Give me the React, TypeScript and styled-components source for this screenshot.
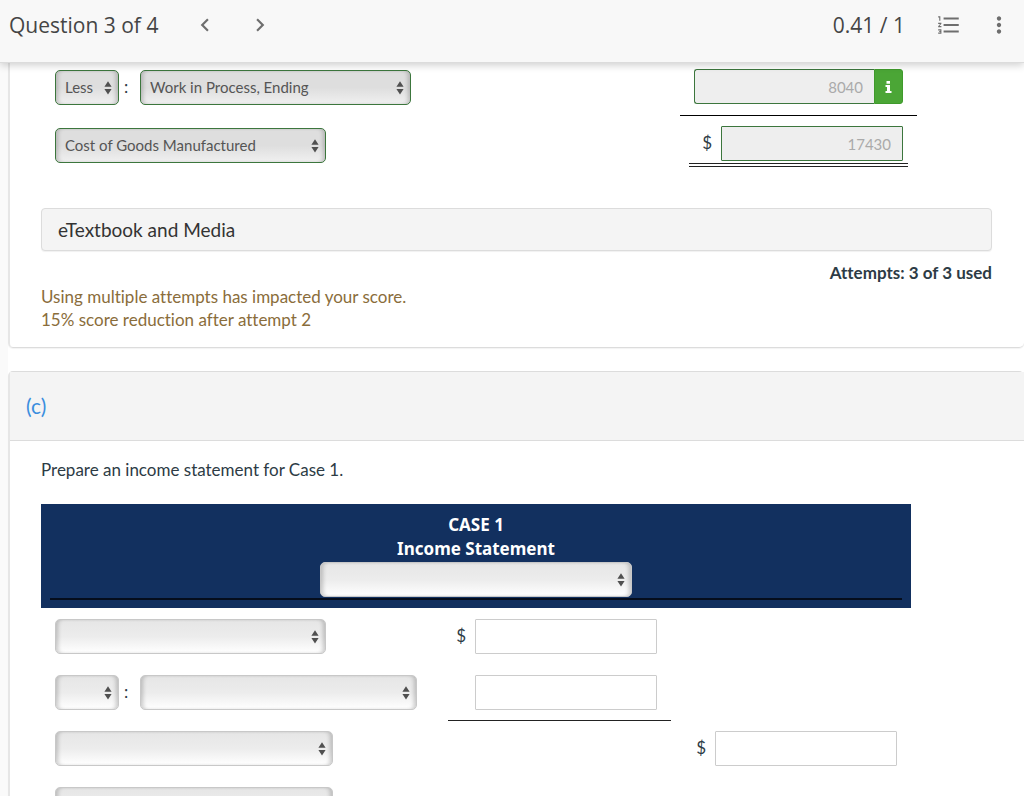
import React from "react";
import styled, { createGlobalStyle } from "styled-components";
import {
  MdChevronLeft,
  MdChevronRight,
  MdFormatListNumbered,
  MdMoreVert,
} from "react-icons/md";

const GlobalStyle = createGlobalStyle`
  *, *::before, *::after { box-sizing: border-box; }
  body {
    margin: 0;
    background: #fff;
    color: #2d3b45;
    font: 17px/24px Lato, sans-serif;
    font-variant-ligatures: none;
  }
  button, input, select { font-family: inherit; font-variant-ligatures: none; margin: 0; }
`;

const Shell = styled.div`
  display: flex;
  flex-direction: column;
  height: 100vh;
`;

const TopBar = styled.header`
  position: relative;
  z-index: 1;
  flex: none;
  display: flex;
  align-items: center;
  justify-content: space-between;
  height: 63px;
  padding: 0 12px 12px 9px;
  background: #f8f8f8;
  border-bottom: 1px solid #dcdcdc;
  box-shadow: 0 2px 8px rgba(0, 0, 0, 0.2);
  color: #454545;
  font: 21px/28px "Open Sans", sans-serif;
`;

const BarGroup = styled.div<{ $gap: number }>`
  display: flex;
  align-items: center;
  gap: ${(p) => p.$gap}px;
`;

const Title = styled.h1`
  margin: 0 5px 0 0;
  font: inherit;
`;

const Score = styled.span`
  margin-right: 7px;
`;

const IconButton = styled.button`
  display: flex;
  padding: 0;
  border: 0;
  background: none;
  color: #6e6e6e;
  font-size: 26px;
`;

const Scroller = styled.main`
  flex: 1;
  min-height: 0;
  overflow-y: auto;
  scrollbar-width: none;
  padding-left: 8px;
  background: linear-gradient(to right, #fafafa 8px, #fff 8px);
`;

const Panel = styled.section<{ $continued?: boolean }>`
  border: 1px solid #dcdcdc;
  border-left: 2px solid #e6e6e6;
  border-right: 0;
  border-top-width: ${(p) => (p.$continued ? 0 : 1)}px;
  border-radius: ${(p) => (p.$continued ? "0 0 5px 5px" : "5px 5px 0 0")};
  box-shadow: 0 1px 1px rgba(0, 0, 0, 0.05);
  margin-bottom: 23px;
`;

const PanelHeader = styled.h2`
  display: flex;
  align-items: center;
  height: 69px;
  margin: 0;
  padding: 0 16px;
  background: #f4f4f4;
  border-bottom: 1px solid #dcdcdc;
  color: #3b8ede;
  font-size: 21px;
  font-weight: 400;
`;

const PanelBody = styled.div`
  padding: 0 32px 16px 31px;
`;

const Sheet = styled.table<{ $width: number }>`
  width: 100%;
  max-width: ${(p) => p.$width}px;
  table-layout: fixed;
  border-collapse: collapse;
`;

const Col = styled.col<{ $width: number }>`
  width: ${(p) => p.$width}px;
`;

const Cell = styled.td`
  padding: 0;
  vertical-align: bottom;
`;

const Line = styled.div<{ $top?: number; $bottom?: number }>`
  display: flex;
  align-items: center;
  padding: ${(p) => p.$top ?? 11}px 14px ${(p) => p.$bottom ?? 10}px;
`;

const Amount = styled(Line)<{ $rule?: boolean }>`
  width: 223px;
  justify-content: flex-end;
  box-shadow: ${(p) => (p.$rule ? "0 1px 0 #222" : "none")};
`;

const WideAmount = styled(Line)`
  border-bottom: 1px solid #000;
`;

const TotalAmount = styled(Line)`
  justify-content: flex-end;
  margin: 0 9px 41px;
  padding: 10px 5px 2px;
  border-bottom: 4px double #222;
`;

const Currency = styled.span`
  margin-right: 9px;
  padding-bottom: 2px;
`;

const Colon = styled.span`
  width: 21px;
  padding: 0 0 2px 5px;
`;

const SelectBox = styled.span<{ $width: number }>`
  position: relative;
  display: inline-flex;
  width: ${(p) => p.$width}px;
  color: #555;
`;

const SelectField = styled.select<{ $graded?: boolean }>`
  appearance: none;
  width: 100%;
  height: 35px;
  padding: 0 20px 2px 9px;
  border: 1px solid ${(p) => (p.$graded ? "#3c763d" : "#c8c8c8")};
  border-radius: 5px;
  background: ${(p) =>
    p.$graded
      ? "linear-gradient(#dedede 50%, #f0f0f0)"
      : "linear-gradient(#e6e6e6, #ececec 50%, #fff)"};
  box-shadow: inset 4px 0 4px -2px rgba(0, 0, 0, 0.2),
    inset -4px 0 4px -2px rgba(0, 0, 0, 0.2);
  color: #555;
  font-size: 15px;
  opacity: 1;
`;

const Arrows = styled.svg`
  position: absolute;
  top: 11px;
  right: 7px;
  pointer-events: none;
`;

const NumberField = styled.input<{ $graded?: boolean; $joined?: boolean }>`
  width: ${(p) => (p.$joined ? 180 : 182)}px;
  height: 35px;
  padding: 0 11px;
  border: 1px solid ${(p) => (p.$graded ? "#3c763d" : "#ccc")};
  border-right-width: ${(p) => (p.$joined ? 0 : 1)}px;
  border-radius: ${(p) => (p.$joined ? "3px 0 0 3px" : "1px")};
  background: ${(p) => (p.$graded ? "#eee" : "#fff")};
  color: #aaa;
  font-size: 15px;
  text-align: right;
`;

const InfoButton = styled.button`
  display: flex;
  align-items: center;
  justify-content: center;
  width: 29px;
  height: 35px;
  padding: 0;
  border: 1px solid #3f9a2c;
  border-radius: 0 3px 3px 0;
  background: #4ba636;
`;

const MediaButton = styled.button`
  display: block;
  width: 100%;
  height: 43px;
  padding: 0 16px 1px;
  border: 1px solid #dcdcdc;
  border-radius: 4px;
  background: #f4f4f4;
  box-shadow: 0 1px 1px rgba(0, 0, 0, 0.06);
  color: #333;
  font-size: 19px;
  text-align: left;
`;

const Attempts = styled.p`
  margin: 10px 0 0;
  font-weight: 700;
  text-align: right;
`;

const Warning = styled.p`
  margin: 0;
  color: #8a6d3b;
  line-height: 23px;
`;

const Prompt = styled.p`
  margin: 0;
  padding: 17px 0 22px;
`;

const Heading = styled.th`
  padding: 9px 9px 8px;
  background: #12305f;
  color: #fff;
  font: 700 17px/24px "Noto Sans", sans-serif;
`;

const HeadingInner = styled.div`
  display: flex;
  flex-direction: column;
  align-items: center;
  border-bottom: 2px solid #050d1c;
`;

const HeadingSelect = styled.div`
  display: flex;
  padding: 1px 0;
`;

function Dropdown({
  label,
  width,
  value = "",
  graded,
}: {
  label: string;
  width: number;
  value?: string;
  graded?: boolean;
}) {
  return (
    <SelectBox $width={width}>
      <SelectField
        aria-label={label}
        $graded={graded}
        disabled={graded}
        defaultValue={value}
      >
        <option value={value}>{value}</option>
      </SelectField>
      <Arrows width="8" height="14" viewBox="0 0 8 14" aria-hidden="true">
        <path d="M4 0.2 7.6 5.8H0.4ZM0.4 8H7.6L4 13.6Z" fill="#505050" />
      </Arrows>
    </SelectBox>
  );
}

export default function App() {
  return (
    <>
      <GlobalStyle />
      <Shell>
        <TopBar>
          <BarGroup $gap={29}>
            <Title>Question 3 of 4</Title>
            <IconButton aria-label="Previous question">
              <MdChevronLeft />
            </IconButton>
            <IconButton aria-label="Next question">
              <MdChevronRight />
            </IconButton>
          </BarGroup>
          <BarGroup $gap={24}>
            <Score>0.41 / 1</Score>
            <IconButton aria-label="Question list">
              <MdFormatListNumbered />
            </IconButton>
            <IconButton aria-label="More options">
              <MdMoreVert />
            </IconButton>
          </BarGroup>
        </TopBar>

        <Scroller>
          <Panel $continued>
            <PanelBody>
              <Sheet $width={876}>
                <colgroup>
                  <Col $width={639} />
                  <Col $width={237} />
                </colgroup>
                <tbody>
                  <tr>
                    <Cell>
                      <Line $top={7} $bottom={11}>
                        <Dropdown label="Add or less" width={64} value="Less" graded />
                        <Colon>:</Colon>
                        <Dropdown
                          label="Line item"
                          width={271}
                          value="Work in Process, Ending"
                          graded
                        />
                      </Line>
                    </Cell>
                    <Cell>
                      <WideAmount $top={6} $bottom={11}>
                        <NumberField
                          aria-label="Work in process amount"
                          defaultValue="8040"
                          disabled
                          $graded
                          $joined
                        />
                        <InfoButton aria-label="Answer information">
                          <svg width="7" height="12" viewBox="0 0 7 12" aria-hidden="true">
                            <path
                              d="M1.5 0H5V2.8H1.5ZM0.5 4H5V10H6.5V12H0.5V10H2V6H0.5Z"
                              fill="#fff"
                            />
                          </svg>
                        </InfoButton>
                      </WideAmount>
                    </Cell>
                  </tr>
                  <tr>
                    <Cell>
                      <Line $top={12} $bottom={45}>
                        <Dropdown
                          label="Total line"
                          width={271}
                          value="Cost of Goods Manufactured"
                          graded
                        />
                      </Line>
                    </Cell>
                    <Cell>
                      <TotalAmount>
                        <Currency>$</Currency>
                        <NumberField
                          aria-label="Cost of goods manufactured amount"
                          defaultValue="17430"
                          disabled
                          $graded
                        />
                      </TotalAmount>
                    </Cell>
                  </tr>
                </tbody>
              </Sheet>
              <MediaButton>eTextbook and Media</MediaButton>
              <Attempts>Attempts: 3 of 3 used</Attempts>
              <Warning>
                Using multiple attempts has impacted your score.
                <br />
                15% score reduction after attempt 2
              </Warning>
            </PanelBody>
          </Panel>

          <Panel>
            <PanelHeader>(c)</PanelHeader>
            <PanelBody>
              <Prompt>Prepare an income statement for Case 1.</Prompt>
              <Sheet $width={870}>
                <colgroup>
                  <Col $width={407} />
                  <Col $width={240} />
                  <Col $width={223} />
                </colgroup>
                <thead>
                  <tr>
                    <Heading colSpan={3}>
                      <HeadingInner>
                        <span>CASE 1</span>
                        <span>Income Statement</span>
                        <HeadingSelect>
                          <Dropdown label="Statement period" width={312} />
                        </HeadingSelect>
                      </HeadingInner>
                    </Heading>
                  </tr>
                </thead>
                <tbody>
                  <tr>
                    <Cell>
                      <Line>
                        <Dropdown label="First line item" width={271} />
                      </Line>
                    </Cell>
                    <Cell>
                      <Amount>
                        <Currency>$</Currency>
                        <NumberField aria-label="First amount" />
                      </Amount>
                    </Cell>
                    <Cell />
                  </tr>
                  <tr>
                    <Cell>
                      <Line>
                        <Dropdown label="Add or less" width={64} />
                        <Colon>:</Colon>
                        <Dropdown label="Second line item" width={277} />
                      </Line>
                    </Cell>
                    <Cell>
                      <Amount $rule>
                        <NumberField aria-label="Second amount" />
                      </Amount>
                    </Cell>
                    <Cell />
                  </tr>
                  <tr>
                    <Cell>
                      <Line>
                        <Dropdown label="Third line item" width={278} />
                      </Line>
                    </Cell>
                    <Cell />
                    <Cell>
                      <Amount>
                        <Currency>$</Currency>
                        <NumberField aria-label="Third amount" />
                      </Amount>
                    </Cell>
                  </tr>
                  <tr>
                    <Cell>
                      <Line>
                        <Dropdown label="Fourth line item" width={278} />
                      </Line>
                    </Cell>
                    <Cell />
                    <Cell />
                  </tr>
                </tbody>
              </Sheet>
            </PanelBody>
          </Panel>
        </Scroller>
      </Shell>
    </>
  );
}
